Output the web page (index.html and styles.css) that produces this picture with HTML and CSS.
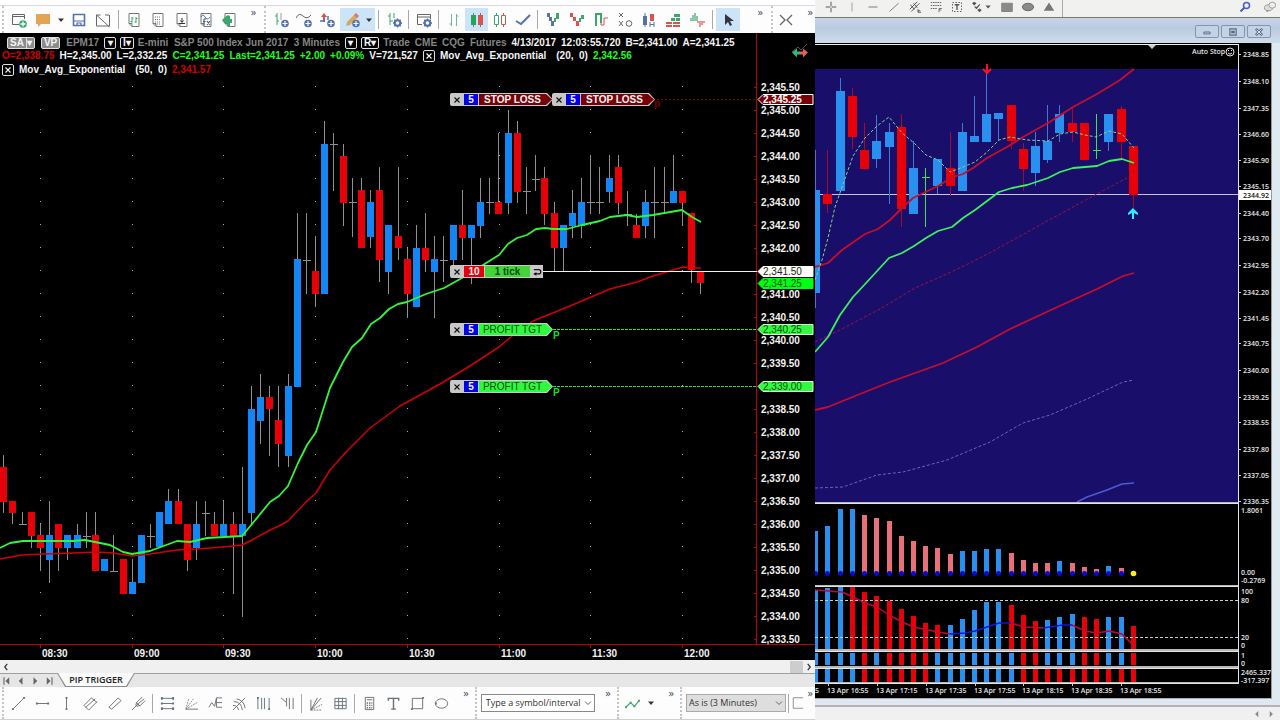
FILE: index.html
```html
<!DOCTYPE html>
<html lang="en">
<head>
<meta charset="utf-8">
<title>Trading workspace</title>
<link rel="stylesheet" href="styles.css">
</head>
<body>
<main class="workspace">
  <section class="platform">
    <div class="toolbar-edge"></div>
    <div class="toolbar" role="toolbar" aria-label="Chart">
      <div class="group grip group-file">
        <button class="tool" data-icon="newWin" aria-label="New window"></button>
        <button class="tool" data-icon="folder" aria-label="Open"></button>
        <button class="tool caret" data-icon="caret" aria-label="Open menu"></button>
        <button class="tool" data-icon="save" aria-label="Save"></button>
        <button class="tool" data-icon="noLine" aria-label="Clear"></button>
        <i class="sep"></i>
        <button class="tool" data-icon="pageBars" aria-label="Chart page"></button>
        <button class="tool" data-icon="pageGrid" aria-label="Quote page"></button>
        <button class="tool" data-icon="pageDown" aria-label="Import page"></button>
        <button class="tool" data-icon="pageFx" aria-label="Formula page"></button>
        <button class="tool" data-icon="pagePlus" aria-label="Add page"></button>
        <button class="more" aria-label="More tools">»</button>
      </div>
      <div class="group grip group-study">
        <button class="tool narrow" data-icon="addBar" aria-label="Add symbol"></button>
        <button class="tool narrow" data-icon="addWave" aria-label="Add study"></button>
        <button class="tool narrow" data-icon="addArrows" aria-label="Add signal"></button>
        <span class="split">
          <button class="tool narrow" data-icon="pencil" aria-label="Draw"></button>
          <button class="tool caret" data-icon="caret" aria-label="Draw menu"></button>
        </span>
        <i class="sep"></i>
        <button class="tool narrow" data-icon="barGear" aria-label="Chart settings"></button>
        <i class="sep"></i>
        <button class="tool narrow" data-icon="winGear" aria-label="Window settings"></button>
        <i class="sep"></i>
        <button class="tool narrow" data-icon="ohlc" aria-label="Bars"></button>
        <button class="tool narrow active" data-icon="candles" aria-label="Candles"></button>
        <button class="tool narrow" data-icon="hollow" aria-label="Hollow candles"></button>
        <button class="tool narrow" data-icon="line" aria-label="Line"></button>
        <i class="sep"></i>
        <button class="tool" data-icon="renko" aria-label="Renko"></button>
        <button class="tool" data-icon="breakLine" aria-label="Line break"></button>
        <button class="tool" data-icon="kagi" aria-label="Kagi"></button>
        <button class="tool" data-icon="pnf" aria-label="Point and figure"></button>
        <button class="tool" data-icon="heikin" aria-label="Heikin Ashi"></button>
        <button class="tool" data-icon="profile" aria-label="Profile"></button>
        <button class="tool" data-icon="steps" aria-label="Market steps"></button>
        <i class="sep"></i>
        <button class="tool active" data-icon="pointer" aria-label="Pointer"></button>
        <button class="more" aria-label="More chart types">»</button>
      </div>
      <div class="group grip group-last">
        <button class="tool" data-icon="squeeze" aria-label="Compress bars"></button>
        <button class="more" aria-label="More spacing tools">»</button>
      </div>
    </div>

    <div class="chart">
      <svg class="plot" id="main-plot" viewBox="0 33 815 627" role="img" aria-label="E-mini S&amp;P 500 candles"></svg>
      <header class="legend">
        <div class="row row-symbol">
          <button class="chip filled">SA<b>▾</b></button>
          <button class="chip filled">VP</button>
          <span class="dim">EPM17</span>
          <button class="chip" aria-label="Symbol menu">▾</button>
          <button class="chip">I▾</button>
          <span class="dim">E-mini&nbsp; S&amp;P 500 Index Jun 2017&nbsp; 3 Minutes</span>
          <button class="chip" aria-label="Interval menu">▾</button>
          <button class="chip">R▾</button>
          <span class="dim">Trade</span><span class="dim">CME</span><span class="dim">CQG</span><span class="dim">Futures</span>
          <span>4/13/2017</span><span>12:03:55.720</span><span>B=2,341.00</span><span>A=2,341.25</span>
        </div>
        <div class="row">
          <span class="down">O=2,338.75</span><span>H=2,345.00</span><span>L=2,332.25</span><span class="up">C=2,341.25</span><span class="up">Last=2,341.25</span><span class="up">+2.00</span><span class="up">+0.09%</span><span>V=721,527</span>
          <button class="chip box" data-icon="cross" aria-label="Remove 20-period average"></button>
          <span class="study">Mov_Avg_Exponential</span><span>(20,&nbsp; 0)</span><span class="up">2,342.56</span>
        </div>
        <div class="row">
          <button class="chip box" data-icon="cross" aria-label="Remove 50-period average"></button>
          <span class="study">Mov_Avg_Exponential</span><span>(50,&nbsp; 0)</span><span class="down">2,341.57</span>
        </div>
      </header>
      <div class="order stop" style="--x:450;--y:60"><button data-icon="cross" aria-label="Cancel stop"></button><span class="qty">5</span><span class="label">STOP LOSS</span></div>
      <div class="order stop" style="--x:552;--y:60"><button data-icon="cross" aria-label="Cancel stop"></button><span class="qty">5</span><span class="label">STOP LOSS</span></div>
      <div class="order position" style="--x:450;--y:232"><button data-icon="cross" aria-label="Close position"></button><span class="qty">10</span><span class="label">1 tick</span><button data-icon="reverse" aria-label="Reverse position"></button></div>
      <div class="order target" style="--x:450;--y:290"><button data-icon="cross" aria-label="Cancel target"></button><span class="qty">5</span><span class="label">PROFIT TGT</span></div>
      <div class="order target" style="--x:450;--y:347"><button data-icon="cross" aria-label="Cancel target"></button><span class="qty">5</span><span class="label">PROFIT TGT</span></div>
    </div>

    <div class="scroll">
      <button data-icon="left" aria-label="Scroll left"></button>
      <span class="thumb"></span>
      <button data-icon="right" aria-label="Scroll right"></button>
    </div>
    <nav class="pages">
      <button data-icon="first" aria-label="First page"></button>
      <button data-icon="prev" aria-label="Previous page"></button>
      <button data-icon="next" aria-label="Next page"></button>
      <button data-icon="last" aria-label="Last page"></button>
      <button class="page-tab"><span>PIP TRIGGER</span></button>
    </nav>
    <div class="toolbar drawing" role="toolbar" aria-label="Drawing">
      <div class="group grip group-draw">
        <button class="tool" data-icon="trend" aria-label="Trend line"></button>
        <button class="tool" data-icon="horiz" aria-label="Horizontal line"></button>
        <button class="tool" data-icon="vert" aria-label="Vertical line"></button>
        <button class="tool" data-icon="channel3" aria-label="Regression channel"></button>
        <button class="tool" data-icon="channel2" aria-label="Parallel lines"></button>
        <button class="tool" data-icon="fork" aria-label="Pitchfork"></button>
        <i class="sep"></i>
        <button class="tool" data-icon="retrace" aria-label="Retracement"></button>
        <button class="tool" data-icon="fan" aria-label="Fan"></button>
        <button class="tool" data-icon="extend" aria-label="Extension"></button>
        <button class="tool" data-icon="arcs" aria-label="Arcs"></button>
        <button class="tool" data-icon="timeZones" aria-label="Time zones"></button>
        <button class="tool" data-icon="timeExt" aria-label="Time extension"></button>
        <i class="sep"></i>
        <button class="tool" data-icon="gann" aria-label="Gann lines"></button>
        <button class="tool" data-icon="grid" aria-label="Gann grid"></button>
        <i class="sep"></i>
        <button class="tool" data-icon="calc" aria-label="Calculator"></button>
        <button class="tool" data-icon="text" aria-label="Text"></button>
        <button class="tool" data-icon="rect" aria-label="Rectangle"></button>
        <button class="tool" data-icon="oval" aria-label="Ellipse"></button>
        <button class="more" aria-label="More drawing tools">»</button>
      </div>
      <div class="group grip group-symbol">
        <span class="combo"><select aria-label="Symbol"><option>Type a symbol/interval</option></select><i data-icon="chevron"></i></span>
        <button class="more" aria-label="More symbol tools">»</button>
      </div>
      <div class="group grip group-zig">
        <button class="tool" data-icon="zigzag" aria-label="Study line"></button>
        <button class="tool caret" data-icon="caret" aria-label="Study menu"></button>
        <button class="more" aria-label="More study tools">»</button>
      </div>
      <div class="group grip group-interval">
        <span class="combo gray"><select aria-label="Interval"><option>As is (3 Minutes)</option></select><i data-icon="chevron"></i></span>
        <i class="sep"></i>
        <button class="tool clipped" data-icon="bracket" aria-label="Range"></button>
        <button class="more" aria-label="More interval tools">»</button>
      </div>
    </div>
  </section>

  <section class="terminal">
    <div class="terminal-tools" role="toolbar" aria-label="Terminal">
      <button data-icon="plus" aria-label="Crosshair"></button>
      <button data-icon="vbar" aria-label="Vertical line"></button>
      <button data-icon="hbar" aria-label="Horizontal line"></button>
      <button data-icon="diag" aria-label="Trend line"></button>
      <button data-icon="equi" aria-label="Equidistant channel"></button>
      <button data-icon="fibo" aria-label="Fibonacci"></button>
      <button data-icon="textBox" aria-label="Text label"></button>
      <button data-icon="arrowsMenu" class="wide" aria-label="Arrows"></button>
      <button data-icon="solidRect" aria-label="Rectangle"></button>
      <button data-icon="solidOval" aria-label="Ellipse"></button>
      <button data-icon="solidTri" aria-label="Triangle"></button>
      <i class="sep"></i>
      <button data-icon="search" class="push" aria-label="Search"></button>
      <button data-icon="chat" aria-label="Chat"></button>
    </div>
    <div class="titlebar">
      <button data-icon="min" aria-label="Minimize"></button>
      <button data-icon="max" aria-label="Restore"></button>
      <button data-icon="close" aria-label="Close"></button>
    </div>
    <div class="frame">
      <svg class="plot" id="side-plot" viewBox="815 43 457 656" role="img" aria-label="Index chart with indicators"></svg>
    </div>
    <div class="terminal-tabs">
      <button data-icon="prev" aria-label="Previous chart"></button>
      <button data-icon="next" aria-label="Next chart"></button>
    </div>
  </section>
</main>
<script src="script.js"></script>
</body>
</html>
```
FILE: styles.css
```css
* { box-sizing: border-box; }
body {
  margin: 0;
  background: #000;
  font-family: "Open Sans", "Noto Sans", sans-serif;
}
button {
  padding: 0;
  border: 0;
  background: none;
  font: inherit;
  color: inherit;
}
svg { display: block; }
.workspace {
  display: grid;
  grid-template-columns: 815fr 465fr;
  min-height: 100vh;
}
.platform, .terminal {
  display: flex;
  flex-direction: column;
  min-width: 0;
}
.platform {
  background: #fdfdfd;
  overflow: hidden;
}

/* toolbars */
.toolbar-edge {
  height: 6px;
  border-bottom: 1px solid #d6dae0;
  background: #fff;
}
.toolbar {
  display: flex;
  height: 27px;
  background: #fdfdfe;
}
.group {
  display: flex;
  align-items: center;
  padding-left: 3px;
  border-left: 2px dotted #c4c4c4;
  margin-left: 2px;
}
.group-file { flex: 261 0 0; }
.group-study { flex: 511 0 0; }
.group-last { flex: 41 0 0; }
.tool {
  display: flex;
  flex: none;
  align-items: center;
  justify-content: center;
  width: 24px;
  height: 23px;
}
.tool svg { width: 16px; height: 16px; }
.tool.narrow { width: 23px; }
.tool.caret { width: 12px; }
.tool.caret svg { width: 8px; height: 8px; }
.tool.active, .split { background: #cce4f7; }
.split {
  display: flex;
  margin-left: 2px;
}
.sep {
  flex: none;
  width: 1px;
  height: 19px;
  margin: 0 3px;
  background: #a8a8a8;
}
.more {
  align-self: flex-start;
  margin-left: auto;
  padding-right: 6px;
  font: 11px/11px "Open Sans", sans-serif;
  color: #444c60;
}
.group-last .more { padding-right: 2px; }
.group-last { padding-left: 2px; }
.group-last .tool { width: 22px; }

/* main chart */
.chart {
  display: grid;
  position: relative;
  background: #000;
  color: #f4f4f4;
  font: bold 10px/12px "Liberation Sans", Arial, sans-serif;
}
.plot { width: 100%; height: auto; }
.chart > .plot, .legend { grid-area: 1 / 1; }
.legend { padding: 3px 2px; }
.row {
  display: flex;
  align-items: center;
  gap: 5px;
  height: 14px;
  white-space: nowrap;
}
.row-symbol {
  height: 13px;
  gap: 4px;
  padding-left: 5px;
}
.row-symbol span { margin-right: 1px; }
.dim { color: #858585; }
.up { color: #1eff1e; }
.down { color: #d00000; }
.study { margin-right: 5px; }
.chip {
  display: flex;
  align-items: center;
  justify-content: center;
  min-width: 12px;
  height: 12px;
  padding: 0 2px;
  border: 1px solid #e0e0e0;
  border-radius: 2px;
  line-height: 10px;
}
.chip.filled {
  margin-right: 2px;
  background: #8c8c8c;
}
.chip.filled b { margin-left: 2px; border-left: 1px solid #ddd; }
.chip.box { width: 12px; padding: 0; }
.box svg { width: 10px; height: 10px; }

/* order tags */
.order {
  position: absolute;
  left: calc(var(--x) / 815 * 100%);
  top: calc(var(--y) / 627 * 100%);
  display: flex;
  gap: 1px;
  height: 13px;
  padding: 1px 0 1px 1px;
  border-radius: 2px 0 0 2px;
  background: #c8c8c8;
  line-height: 11px;
  text-align: center;
}
.order button {
  display: flex;
  align-items: center;
  justify-content: center;
  width: 12px;
  color: #111;
}
.order svg { width: 10px; height: 10px; }
.order .qty { width: 14px; background: #0000e6; }
.stop, .target { clip-path: polygon(0 0, calc(100% - 6px) 0, 100% 50%, calc(100% - 6px) 100%, 0 100%); }
.stop .label, .target .label {
  width: 73px;
  padding-right: 6px;
  margin-right: 1px;
  clip-path: polygon(0 0, calc(100% - 6px) 0, 100% 50%, calc(100% - 6px) 100%, 0 100%);
  white-space: nowrap;
}
.stop .label { background: #780008; }
.target .label { background: #2dfa3c; color: #074a10; font-weight: normal; }
.position { padding-right: 1px; }
.position .qty { width: 20px; background: #e2000f; }
.position .label { width: 45px; background: #3fd636; color: #074a10; }
.position button:last-child { width: 11px; }

/* scroll bar and page tabs */
.scroll {
  display: flex;
  align-items: center;
  height: 13px;
  background: #f0f0f0;
  color: #333;
}
.scroll svg { width: 12px; height: 10px; }
.thumb {
  width: 13px;
  height: 12px;
  margin-left: auto;
  background: #cdcdcd;
}
.pages {
  display: flex;
  height: 14px;
  border-top: 1px solid #a0a0a0;
  background: #e6e6e6;
  color: #666;
}
.pages button { width: 14px; }
.pages svg { width: 14px; height: 12px; }
.pages .page-tab {
  width: 78px;
  margin: -1px 0 0 1px;
  padding: 0 1px 1px;
  background: #8c8c8c;
  clip-path: polygon(0 0, 100% 0, calc(100% - 8px) 100%, 8px 100%);
}
.page-tab span {
  display: block;
  background: #fafafa;
  clip-path: polygon(0 0, 100% 0, calc(100% - 8px) 100%, 8px 100%);
  font-size: 9px;
  font-weight: 600;
  line-height: 13px;
  color: #222;
}
.drawing {
  height: 33px;
  border-bottom: 1px solid #d0d0d0;
  background: #fdfdfd;
}
.drawing .group { padding-left: 2px; }
.drawing .group-symbol, .drawing .group-interval { padding-left: 4px; }
.drawing .sep { margin: 0 2px; }
.drawing .tool svg { width: 15px; height: 15px; color: #687078; }
.drawing .caret svg { width: 8px; height: 8px; }
.drawing .more { padding-right: 4px; }
.drawing .group-interval .more { padding-right: 2px; }
.group-draw { flex: 481 0 0; }
.group-symbol { flex: 138 0 0; }
.group-zig { flex: 59 0 0; }
.group-interval { flex: 133 0 0; }
.combo {
  display: flex;
  align-items: center;
  position: relative;
  flex: none;
  width: 114px;
  height: 18px;
  border: 1px solid #888;
  background: #fff;
}
.combo.gray { width: 100px; background: #dedede; border-color: #aaa; }
.combo select {
  width: 100%;
  padding: 0 4px;
  border: 0;
  appearance: none;
  background: none;
  font: 9px/14px "Open Sans", sans-serif;
  color: #333;
}
.combo.gray select { padding: 0 2px; }
.combo i {
  position: absolute;
  right: 2px;
  pointer-events: none;
  color: #555;
}
.combo svg { width: 8px; height: 8px; }
.tool.clipped { width: 12px; }
.drawing .clipped svg { width: 12px; height: 16px; }

/* terminal window */
.terminal { background: #dfe7f2; }
.terminal-tools {
  display: flex;
  align-items: center;
  height: 18px;
  padding: 0 0 3px 5px;
  border-bottom: 1px solid #777;
  background: #f1f1f0;
  color: #555;
}
.terminal-tools button { width: 21px; }
.terminal-tools .wide { width: 29px; }
.terminal-tools svg { height: 12px; margin: 0 auto; }
.terminal-tools .push { width: 29px; margin-left: auto; }
.titlebar {
  display: flex;
  align-items: center;
  justify-content: flex-end;
  gap: 2px;
  height: 25px;
  padding: 2px 9px 0 0;
  background: linear-gradient(#c9d5e4, #b9cbe0 40%, #cfdcec);
  color: #5b6880;
}
.titlebar button {
  width: 24px;
  height: 13px;
  border: 1px solid #8794aa;
  border-radius: 2px;
  background: #c4d2e5;
}
.titlebar svg { width: 12px; height: 10px; margin: 0 auto; }
.frame {
  padding-right: 8px;
  background: #dfe9f0;
}
.terminal-tabs {
  display: flex;
  flex: 1;
  justify-content: flex-end;
  align-items: center;
  margin-top: 6px;
  padding-right: 2px;
  border-top: 2px solid #b4b4b4;
  background: #f0f0f0;
  color: #888;
}
.terminal-tabs svg { width: 14px; height: 10px; }

/* drawn text */
.axis, .time {
  fill: #f2f2f2;
  font: bold 10px "Liberation Sans", Arial, sans-serif;
}
.side-text {
  fill: #e6e6e6;
  font: 600 7px "Open Sans", sans-serif;
}
```
FILE: script.js
```js
// Icon artwork on a 16-unit square.
const S = (d, c = 'currentColor', w = 1, x = '') => `<path d="${d}" fill="none" stroke="${c}" stroke-width="${w}" ${x}/>`;
const F = (d, c = 'currentColor') => `<path d="${d}" fill="${c}"/>`;
const G = '#3aa76d', R = '#d9534f', B = '#5573a8', K = '#666';
const addMark = '<circle cx="12" cy="11.500" r="3.800" fill="#5573a8"/>' + S('M9.500 11.500h5M12 9v5', '#fff', 1.2);
const gear = '<circle cx="11.500" cy="11" r="2.800" fill="none" stroke="#5573a8" stroke-width="2"/>' + S('M11.500 6.500v2M11.500 13.500v2M7 11h2M14 11h2M8.300 7.800l1.400 1.400M13.300 12.800l1.400 1.400M14.700 7.800l-1.400 1.400M9.700 12.800l-1.400 1.400', B, 1.4);
const page = S('M3 1.500h10v13H6L3 11.500z', '#777') + S('M3 11.500h3v3', '#777');
const icons = {
  newWin: S('M8 12.500H1.500v-10h12V7', K) + S('M1.500 4.500h12', K) + '<circle cx="12" cy="12" r="3.800" fill="#3aa76d"/>' + S('M9.500 12h5M12 9.500v5', '#fff', 1.3),
  folder: F('M1 2h14v10H6l-3 3v-3H1z', '#e3a456'),
  caret: F('M2 5h12l-6 7z', '#333'),
  save: S('M2.500 2.500h11v11h-11z', B, 1.6) + S('M3 9h10M6 13v-2h4v2', B, 1.2),
  noLine: S('M1.500 3v11h13V3M1.500 3l13 12M1.500 3h4M10 3h4', K),
  pageBars: page + S('M6 5v6M10 5v6M4.500 9.500H6M6 6h1.500M8.500 10H10M10 6.500h1.500', G),
  pageGrid: page + S('M5 5h6M5 7.500h6M5 10h6M5 12h6', '#777', 1, 'stroke-dasharray="1 1"'),
  pageDown: page + S('M8 6v4M6.500 8.500L8 10.500l1.500-2M5 11.500h6', '#333'),
  pageFx: page + S('M3 5q2-4 4 0t5 0', B) + S('M6 13V8q0-1.500 2-1M5 9.500h2.500M9 9l3 4M12 9l-3 4', '#4b5f86', 1.2),
  pagePlus: page + F('M0 8l3-3v1q1-4 5-2v3h2v4H8v3H5v-3H2z', G),
  addBar: S('M4 1v12M2 4h2M4 9h2', G) + S('M8 1v7', '#8a8') + addMark,
  addWave: S('M0 6q3-6 7-2t8-1', K) + addMark,
  addArrows: F('M5 1l3 4H6v5H4V5H2z', R) + S('M1 9h5M9 4v4', B, 1.5) + addMark,
  pencil: F('M2 14l1-4 8-8 3 3-8 8z', '#d9a860') + F('M10 3l2-2 3 3-2 2z', '#d9776b') + addMark,
  barGear: S('M4 1v12M2 4h2M4 9h3M8 1v5', G) + gear,
  winGear: S('M6 12.500H1.500v-10h13V7M1.500 5h13', K) + gear,
  ohlc: S('M5.500 2v12M3.500 12h2M10.500 2v12M10.500 4h2', '#6fb890'),
  candles: S('M4.500 1v14M11.500 1v14', '#777') + F('M2 3h5v10H2z', '#23a35b') + F('M9 3h5v10H9z', R),
  hollow: S('M4.500 1v2M4.500 13v2M2.500 3.500h4v9h-4z', G) + S('M11.500 1v2M11.500 13v2M9.500 3.500h4v9h-4z', R),
  line: S('M1 9l5 3 9-9', B, 2),
  renko: F('M2 1h3v4H2zM4 5h3v4H4zM6 9h3v5H6z', B) + F('M9 6h2v4H9zM11 1h3v6h-3z', G),
  breakLine: F('M1 1h3v4H1zM4 5h3v4H4zM7 9h3v5H7z', R) + F('M10 6h2v4h-2zM12 3h3v4h-3z', G),
  kagi: S('M3 14V2h5v9', G, 2) + S('M8 10v3h3V6h4', R),
  pnf: S('M2 1l4 4M6 1L2 5M2 9l4 5M6 9l-4 5', K) + '<circle cx="12" cy="11.500" r="2.800" fill="none" stroke="#666"/>',
  heikin: F('M2 4h4v9H2z', B) + F('M9 2h4v7H9z', R) + S('M4 1v14M9 10v5M13 10v5M9 12.500h4', B),
  profile: F('M9 2h6v3H9zM6 6h4v3H6zM11 6h4v3h-4z', G) + F('M1 10h6v2H1zM8 10h7v2H8zM1 13h6v2H1zM8 13h7v2H8z', R),
  steps: S('M2 9V6M4 9V3M6 9V1M8 9V4', G, 1.2) + S('M9 9v2M11 9v6M13 9v4M15 9v2', R, 1.2),
  pointer: F('M5 2v11l3-3 2 4 2-1-2-4h4z', '#334'),
  squeeze: S('M2 3l5 5-5 5M14 3L9 8l5 5', K, 1.3),
  cross: S('M4 4l8 8M12 4l-8 8', 'currentColor', 1.8),
  reverse: S('M3 4h8q3 0 3 3.500T11 11H4', 'currentColor', 2) + F('M2 11l5-3v6z'),
  left: S('M10 3L6 8l4 5', 'currentColor', 2), right: S('M6 3l4 5-4 5', 'currentColor', 2),
  first: F('M11 3v10L6 8z') + S('M4 3v10', 'currentColor', 1.5), prev: F('M10 3v10L5 8z'),
  next: F('M6 3v10l5-5z'), last: F('M5 3v10l5-5z') + S('M12 3v10', 'currentColor', 1.5),
  trend: S('M2 14L14 2') + F('M1 13h2v2H1zM13 1h2v2h-2z'),
  horiz: S('M1 8h14') + F('M1 7h2v2H1zM13 7h2v2h-2z'),
  vert: S('M8 2v12') + F('M7 1h2v2H7zM7 13h2v2H7z'),
  channel3: S('M1 10l8-8M3 12L13 3M6 15l9-9M1 10l5 5M9 2l6 5'),
  channel2: S('M2 12L12 2M5 14L15 5M2 12l3 2M12 2l3 3'),
  fork: S('M1 15l7-7M5 10l1-3 6-6M8 8l6-5M6 11l4-1 5-5M6 7l4 4'),
  retrace: S('M1 2.500h14M1 8h14M1 13.500h14') + F('M1 1h2v3H1zM13 1h2v3h-2zM1 7h2v2H1zM13 7h2v2h-2zM1 12h2v3H1zM13 12h2v3h-2z'),
  fan: S('M2 14L5 3M2 14L10 3M2 14l12-7', '#888', 1, 'stroke-dasharray="2 1"') + S('M2 14h13'),
  extend: S('M1 12l3-5 3 4 2-9M9 2h6M9 7h6M9 12h6M9 2v10'),
  arcs: S('M1 15L14 2M2 6q8 0 9 9M5 3q8 2 9 10M1 10q5 0 6 5'),
  timeZones: S('M2 2v12M6 2v12M9 2v12M14 2v12') + F('M1 1h2v2H1zM13 13h2v2h-2z'),
  timeExt: S('M1 2l6 5V2M10 2v12M14 2v12M7 7v4'),
  gann: S('M2 15L13 2M2 15l7-13') + S('M2 15h12M2 15l12-6', '#777', 1, 'stroke-dasharray="2 1"') + S('M2 4v11'),
  grid: S('M2 2.500h12v11H2zM6 2v12M10 2v12M2 6h12M2 10h12'),
  calc: S('M3.500 1.500h9v13h-9zM5 4h6') + S('M5 7.500h6M5 10h6M5 12.500h6', 'currentColor', 1.5, 'stroke-dasharray="1.500 1"'),
  text: S('M2.500 5V2.500h11v2.500M8 3v11M5.500 14h5', 'currentColor', 1.5),
  rect: S('M2.500 2.500h11v11h-11z') + F('M1 13h2v2H1zM13 1h2v2h-2z'),
  oval: '<ellipse cx="8" cy="8" rx="6.500" ry="5" fill="none" stroke="currentColor"/>' + F('M1 7h2v2H1z'),
  chevron: S('M2 5l6 6 6-6', 'currentColor', 1.8),
  zigzag: S('M1 12l5-5 4 4 5-6', G, 1.2) + F('M5 6h2v2H5zM9 10h2v2H9zM0 11h2v2H0zM14 4h2v2h-2z', G),
  bracket: S('M16 1H3v14h13'),
  plus: S('M8 1v6M8 9v6M1 8h6M9 8h6', 'currentColor', 1.3), vbar: S('M8 2v12', '#888'), hbar: S('M2 8h12'), diag: S('M2 14L14 3'),
  equi: S('M1 11L11 1M3 14L14 3M2 5l5 6M6 3l5 6M12 11v4h4M12 13h3', 'currentColor', 1.3),
  fibo: S('M1 2h14M1 6h14M1 10h9', 'currentColor', 1.2, 'stroke-dasharray="2 1"') + S('M12 15v-5h4M12 12h3'),
  textBox: S('M2 2h12v12H2z', 'currentColor', 1.2, 'stroke-dasharray="2 2"') + S('M5 5h6M8 5v7', 'currentColor', 1.8),
  arrowsMenu: F('M0 3l3-2 3 2-3 3zM3 8l3 3 5-6-1-1-4 4-2-1zM7 12l3-2 3 2-3 3zM18 6h7l-3.500 4z'),
  solidRect: S('M1 3h14v11H1z', '#555') + F('M1 3h14v11H1z', '#8a8a8a'),
  solidOval: '<ellipse cx="8" cy="8" rx="7.500" ry="5" fill="#8a8a8a" stroke="#555"/>',
  solidTri: F('M8 2l7 11H1z', '#777'),
  search: '<circle cx="10" cy="6" r="4" fill="#e6ecff" stroke="#4a5fc0" stroke-width="2"/>' + S('M7 9l-5 5', '#4a5fc0', 2.5),
  chat: '<ellipse cx="6" cy="9" rx="5.500" ry="4" fill="#ddd" stroke="#888"/><ellipse cx="11" cy="5.500" rx="4.500" ry="4" fill="#eee" stroke="#888"/>' + F('M4 12l-1 3 4-2z', '#888'),
  min: S('M3 8h10v3H3z', 'currentColor', 1.5), max: S('M3 3h10v10H3zM6 7h4v2H6z', 'currentColor', 1.8),
  close: S('M3 3l10 10M13 3L3 13', 'currentColor', 4) + S('M4 4l8 8M12 4l-8 8', '#e8eef6', 1.5)
};
document.querySelectorAll('[data-icon]').forEach(el => {
  const w = el.dataset.icon === 'arrowsMenu' ? 26 : 16;
  el.innerHTML = `<svg viewBox="0 0 ${w} 16" aria-hidden="true">${icons[el.dataset.icon]}</svg>`;
});

const rect = (x, y, w, h, c) => `<rect x="${x}" y="${y}" width="${w}" height="${h}" fill="${c}"/>`;
const poly = (pts, c, w = 1.5, dash = '') => `<polyline points="${pts}" fill="none" stroke="${c}" stroke-width="${w}" stroke-linejoin="round" stroke-dasharray="${dash}"/>`;
const label = (x, y, s, cls, x2 = '') => `<text x="${x}" y="${y}" class="${cls}" ${x2}>${s}</text>`;

// Main chart: colour, high, body top, body bottom, low.
const bars = `r455,467,502,513 r501,501,513,524 d512,524,524,524 r512,512,536,548 r524,535,548,571 b501,535,560,583 r524,524,548,571 b535,535,548,560 b524,535,548,548 d512,536,536,548 r512,535,571,571 b559,559,571,571 d535,571,571,571 r559,559,594,594 b559,582,594,594 b535,535,583,583 d524,536,536,548 b512,512,547,547 b489,501,524,524 r489,501,524,524 r524,524,560,571 b501,524,548,560 d501,513,513,536 r512,524,536,536 b501,524,536,536 r512,524,536,594 b467,524,536,617 b386,409,513,524 b374,397,421,444 r386,397,409,456 r386,420,444,467 b374,386,456,467 b213,259,387,387 d213,260,260,294 r236,271,294,307 b121,144,294,294 d133,144,144,191 r144,156,203,226 d178,202,202,237 r178,190,248,248 b190,202,237,248 r167,190,260,282 b225,225,272,294 r167,236,248,260 r248,259,294,318 b225,248,307,307 r213,248,260,272 b236,259,272,318 d236,260,260,282 b225,225,260,265 r190,225,238,260 b225,225,238,284 b178,202,226,238 d178,202,202,214 r133,202,214,214 b110,133,203,214 r121,133,192,203 d167,191,191,214 d155,179,179,191 r167,178,214,225 r202,213,248,271 b225,225,248,271 b190,213,226,238 b178,202,226,238 d155,202,202,214 d167,202,202,214 b155,178,192,203 r155,167,203,214 d191,214,214,226 r214,225,238,238 b190,202,226,238 d167,202,202,238 d167,202,202,214 b155,191,203,203 r191,191,203,226 r213,213,270,283 r272,272,283,294`;
let m = '';
const times = ['08:30', '09:00', '09:30', '10:00', '10:30', '11:00', '11:30', '12:00'];
times.forEach((t, k) => {
  const x = Math.round(41 + k * 91.7);
  for (let y = 87; y < 642; y += 23) m += rect(x - 1, y - 1, 1, 1, '#aaa');
  m += rect(x - 1, 644, 1, 4, '#c00000') + label(x + 1, 657, t, 'time');
});
bars.split(' ').forEach((s, i) => {
  const [h, t, b, l] = s.slice(1).split(',').map(Number), x = Math.round(4.3 + i * 9.17);
  m += rect(x - 1, h, 1, l - h, '#8f8f8f');
  m += s[0] === 'd' ? rect(x - 4, t, 8, 1, '#8f8f8f') : rect(x - 4, t, 7, b - t, s[0] === 'r' ? '#e60008' : '#1485f5');
});
m += poly('0,559 22,555 43,554 73,553 97,552 113,553 132,556 150,554 177,550 197,549 223,547 242,545 252,540 270,530 279,526 288,521 307,501 316,493 330,470 346,452 370,428 400,406 440,384 470,366 499,347 512,336 533,321 570,306 610,289 637,282 653,276 683,267 692,268 701,268', '#d00008');
m += poly('0,548 10,543 23,541 73,541 85,540 110,545 123,552 132,554 150,551 177,541 190,542 207,538 242,536 252,524 270,502 279,496 288,486 298,463 307,445 316,432 330,388 343,362 352,347 362,338 371,324 380,318 389,309 398,304 407,302 426,294 444,288 462,278 483,265 499,255 508,244 517,238 527,235 536,229 545,228 553,229 567,229 582,225 600,221 610,217 627,215 637,217 653,215 682,210 692,217 701,222', '#32f53c', 1.8);
m += rect(756, 33, 1, 612, '#c00000') + rect(0, 644, 815, 1, '#c00000');
for (let k = 0; k < 25; k++) {
  const y = 87 + k * 23, p = 2345.5 - k * 0.5;
  m += rect(754, y, 3, 1, '#c00000');
  if (p !== 2341.5 && p !== 2339) m += label(761, y + 4, p.toLocaleString('en-US', { minimumFractionDigits: 2 }), 'axis');
}
m += poly('653,99.500 757,99.500', '#78000c', 1, '2 2') + rect(543, 271, 214, 1, '#f2f2f2');
[329, 386].forEach(y => {
  m += poly(`553,${y + 0.5} 757,${y + 0.5}`, '#2de03a', 1, '3 1') + label(553, y + 10, 'P', 'axis', 'style="fill:#1ed62c"');
});
m += label(654, 107, 'p', 'axis', 'style="fill:#78000c"');
[[99, '2,345.25', '#780008', '#fff', '#fff'], [283, '2,341.25', '#00ff10', '#075010', '#00ff10'], [271, '2,341.50', '#fffff6', '#222', '#fffff6'], [329, '2,340.25', '#32fa40', '#075010', '#d8ffd8'], [386, '2,339.00', '#32fa40', '#075010', '#d8ffd8']].forEach(([y, s, bg, fg, line]) => {
  m += `<path d="M758 ${y}.500l5-5h50v10h-50z" fill="${bg}" stroke="${line}"/>` + label(763, y + 4, s, 'axis', `style="fill:${fg};font-weight:${fg === '#fff' ? 'bold' : 'normal'}"`);
});
m += S('M792 52l6-5 3 3 6-6', '#555') + F('M792 52.500l5-4v3h3v3h-3v3z', '#35b57b') + F('M808 52.500l-5-4v3h-3v3h3v3z', '#e0605c');
document.getElementById('main-plot').innerHTML = m;

// Side chart.
const blue = '#2a90f0', red = '#e80008', pink = '#e87078';
const colX = j => Math.round(840.7 + 12.21 * j);
const sideBars = `b150,190,293,308 r150,194,204,213 b78,91,191,191 r88,96,137,149 r123,150,169,169 b115,141,159,168 b123,132,147,204 r114,127,209,227 b141,168,214,214 g168,177,177,227 b159,159,186,194 r132,168,186,196 b123,132,191,191 b96,136,142,142 b72,114,142,142 b113,113,119,140 r105,105,141,149 r143,149,169,191 b132,146,173,186 b105,141,160,163 b105,114,133,142 r108,123,132,142 r123,123,160,160 g114,150,150,159 b114,114,142,151 r106,109,142,158 r146,146,195,208`;
let s = rect(815, 43, 457, 656, '#000') + rect(815, 69, 423, 433, '#190f6b') + rect(815, 44, 424, 1, '#eee');
s += rect(815, 194, 423, 1, '#c8c4e0');
sideBars.split(' ').forEach((d, i) => {
  const [h, t, b, l] = d.slice(1).split(',').map(Number), x = colX(i - 2);
  const c = { b: blue, r: red, g: '#3ce05a' }[d[0]];
  s += rect(x - 1, h, 1, l - h, c === red ? '#a8082c' : c === blue ? '#3a7cd0' : c);
  s += t === b ? rect(x - 4, t, 8, 1, c) : rect(x - 5, t, 9, b - t, c);
});
s += poly('815,342 840,330 880,309 915,288 940,277 970,263 995,250 1040,225 1095,195 1127,178', '#9c1048', 1, '3 2');
s += poly('815,488 843,487 877,475 903,472 947,460 990,442 1023,423 1050,415 1087,399 1123,382 1134,380', '#6c62b8', 1, '3 2');
s += poly('1077,502 1087,497 1107,490 1122,484 1134,483', '#4a5cd0', 1.6);
s += poly('815,410 828,407 850,398 890,382 943,363 977,347 1010,329 1053,309 1097,289 1123,276 1134,273', '#c80c2c', 1.8);
s += poly('815,267 828,263 842,250 865,234 878,229 890,220 902,208 913,198 938,186 953,177 963,174 973,168 987,158 1007,147 1023,137 1048,123 1073,107 1097,94 1120,80 1134,69', '#c80c2c', 1.8);
s += poly('815,352 828,337 840,315 853,297 867,282 889,258 902,253 914,246 926,238 938,231 952,227 963,218 975,210 987,201 999,192 1012,188 1027,185 1048,178 1060,172 1073,168 1085,167 1097,166 1109,161 1122,159 1134,163', '#3cf05c', 1.8);
s += poly('815,280 822,260 828,238 835,207 841,190 853,156 865,138 877,126 889,117 902,133 914,143 926,155 938,160 950,172 963,167 975,162 987,152 999,140 1010,137 1027,140 1048,141 1060,134 1073,132 1085,135 1096,137 1109,131 1122,134 1134,148', '#78d890', 1, '3 2');
s += S('M987 64v8M983 69l4 4 4-4', '#ff1020', 2) + F('M1133 208l5 5v2l-4-2v6h-2v-6l-4 2v-2z', '#28f0ff') + F('M1148 45h8l-4 4z', '#ccc');

// Oscillator panels.
const hist = [531, 526, 509, 509, 515, 518, 521, 536, 541, 546, 548, 554, 551, 551, 549, 549, 553, 560, 563, 563, 561, 563, 567, 569, 566, 568, 573];
const histKey = 'bbbbppppppppbbbbppppbpppbpr';
const osc = [590, 588, 587, 587, 592, 596, 601, 609, 616, 623, 625, 625, 619, 610, 602, 602, 605, 615, 621, 620, 617, 614, 617, 619, 617, 617, 626];
const oscKey = 'bbbrrrrrrrrbbbbbrrrbbbrrbbr';
const stripA = 'bbbbrbrrrrbbbbbbbrrbbbrrbbr', stripB = 'bbbbrrrrrrbbbbbbbrrrrrrrrrr';
const pick = { b: blue, r: red, p: pink };
hist.forEach((y, i) => {
  const x = colX(i - 2) - 3;
  s += rect(x, y, 5, 574 - y, pick[histKey[i]]);
  s += `<circle cx="${x + 2.5}" cy="573.500" r="${i === 26 ? 2.8 : 2.5}" fill="${i === 26 ? '#ffee20' : '#0808d0'}"/>`;
  s += rect(x, osc[i], 5, 649 - osc[i], pick[oscKey[i]]) + rect(x, 653, 5, 12, pick[stripA[i]]) + rect(x, 669, 5, 13, pick[stripB[i]]);
});
s += poly('815,600.500 1238,600.500', '#ccc', 1, '3 2') + poly('815,637.500 1238,637.500', '#ccc', 1, '3 2');
s += poly('815,590 828,591 842,592 853,597 865,603 877,607 889,615 902,622 914,627 938,632 950,634', '#c00838');
s += poly('950,634 965,633 975,631 987,627 999,623 1011,623', '#1414d8') + poly('1011,623 1024,627 1043,628', '#c00838');
s += poly('1043,628 1063,625 1072,625', '#1414d8') + poly('1072,625 1085,631 1097,633 1109,631 1122,634 1134,646', '#c00838');
[[502, 2], [585, 2], [649, 3], [666, 3], [682, 2]].forEach(([y, h]) => { s += rect(815, y, 423, h, '#b9b9b9') + rect(815, y + h - 1, 423, 1, '#e4e4e4'); });
s += rect(1238, 44, 1, 640, '#e4e4e4') + rect(1271, 43, 1, 656, '#999') + rect(815, 698, 457, 1, '#aaa');
[[54, '2348.85'], [81, '2348.10'], [108, '2347.35'], [134, '2346.60'], [160, '2345.90'], [186, '2345.15'], [213, '2344.40'], [238, '2343.70'], [265, '2342.95'], [292, '2342.20'], [318, '2341.45'], [343, '2340.75'], [370, '2340.00'], [397, '2339.25'], [422, '2338.55'], [449, '2337.80'], [475, '2337.05'], [501, '2336.35']].forEach(([y, t]) => {
  s += rect(1238, y, 3, 1, '#ccc') + label(1243, y + 3, t, 'side-text');
});
s += rect(1239, 190, 32, 10, '#fff') + label(1243, 198, '2344.92', 'side-text', 'style="fill:#111"');
[[510, '1.8061'], [572, '0.00'], [580, '-0.2769'], [591, '100'], [600, '80'], [637, '20'], [645, '0'], [655, '1'], [663, '0'], [672, '2465.337'], [680, '-317.397']].forEach(([y, t]) => { s += label(1241, y + 3, t, 'side-text'); });
s += label(815, 693, '5', 'side-text');
['16:55', '17:15', '17:35', '17:55', '18:15', '18:35', '18:55'].forEach((t, k) => {
  const x = Math.round(828 + k * 48.84);
  s += rect(x, 683, 1, 3, '#ccc') + label(x - 1, 693, '13 Apr ' + t, 'side-text');
});
s += label(1192, 54, 'Auto Stop', 'side-text') + '<circle cx="1230" cy="52" r="4" fill="none" stroke="#e6e6e6"/>' + S('M1228 53q2 2.500 4 0', '#e6e6e6') + rect(1228, 50, 1, 1, '#fff') + rect(1231, 50, 1, 1, '#fff');
document.getElementById('side-plot').innerHTML = s;
```
